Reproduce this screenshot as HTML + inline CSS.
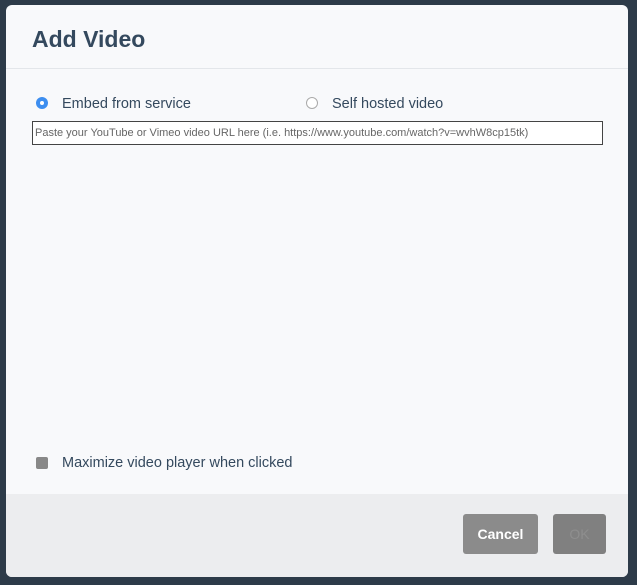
<!DOCTYPE html><html><head><style>
body{margin:0;width:637px;height:585px;background:#2d3b49;font-family:"Liberation Sans",sans-serif;overflow:hidden;position:relative}
.d{position:absolute;left:6px;top:5px;width:622px;height:572px;background:#f8f9fb;border-radius:6px;overflow:hidden}
.h{height:63px;border-bottom:1px solid #e3e6ea}
.h span{position:absolute;left:26px;top:21px;font-size:23px;font-weight:bold;color:#34495e}
.t{position:absolute;font-size:14.5px;color:#34495e}
.r{position:absolute;width:12px;height:12px;border-radius:50%;box-sizing:border-box}
.in{position:absolute;left:26px;top:116px;width:571px;height:24px;border:1px solid #444;box-sizing:border-box;background:#fff;font-size:11px;color:#666;line-height:22px;padding-left:2px;white-space:nowrap;overflow:hidden}
.f{position:absolute;left:0;top:489px;width:622px;height:83px;background:#ecedef}
.b{position:absolute;top:20px;height:40px;border-radius:3px;background:#8b8b8b;color:#fff;font-size:14px;font-weight:bold;text-align:center;line-height:40px}
</style></head><body>
<div class="d">
<div class="h"><span>Add Video</span></div>
<div class="r" style="left:30px;top:92px;background:#3d8ef0"><div style="position:absolute;left:4px;top:4px;width:4px;height:4px;border-radius:50%;background:#fff"></div></div>
<div class="t" style="left:56px;top:91px">Embed from service</div>
<div class="r" style="left:300px;top:92px;border:1px solid #aaa;background:#fff"></div>
<div class="t" style="left:326px;top:91px">Self hosted video</div>
<div class="in">Paste your YouTube or Vimeo video URL here (i.e. https://www.youtube.com/watch?v=wvhW8cp15tk)</div>
<div style="position:absolute;left:30px;top:452px;width:12px;height:12px;border-radius:2px;background:#888"></div>
<div class="t" style="left:56px;top:450px">Maximize video player when clicked</div>
<div class="f">
<div class="b" style="left:457px;width:75px">Cancel</div>
<div class="b" style="left:547px;width:53px;background:#808080;color:#8e8e8e;font-weight:normal">OK</div>
</div>
</div>
</body></html>
